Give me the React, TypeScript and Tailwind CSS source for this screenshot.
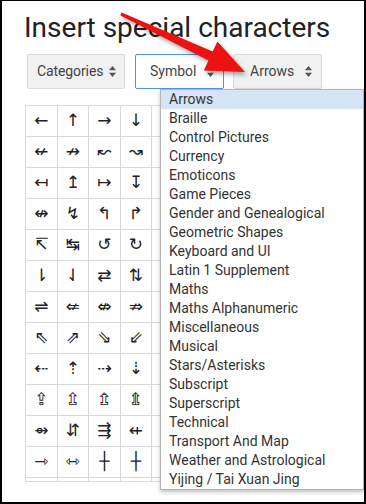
import React from 'react'

const glyphRows = [
  '←↑→↓↔↕↖',
  '↚↛↜↝↞↟↠',
  '↤↥↦↧↨↩↪',
  '↮↯↰↱↲↳↴',
  '↸↹↺↻↼↽↾',
  '⇂⇃⇄⇅⇆⇇⇈',
  '⇌⇍⇎⇏⇐⇑⇒',
  '⇖⇗⇘⇙⇚⇛⇜',
  '⇠⇡⇢⇣⇤⇥⇦',
  '⇪⇫⇬⇭⇮⇯⇰',
  '⇴⇵⇶⇷⇸⇹⇺',
  '⇾⇿┼┼⇽⇸⇹',
  '⟰⟱⟲⟳⟴⟵⟶',
]

const categories = [
  'Arrows',
  'Braille',
  'Control Pictures',
  'Currency',
  'Emoticons',
  'Game Pieces',
  'Gender and Genealogical',
  'Geometric Shapes',
  'Keyboard and UI',
  'Latin 1 Supplement',
  'Maths',
  'Maths Alphanumeric',
  'Miscellaneous',
  'Musical',
  'Stars/Asterisks',
  'Subscript',
  'Superscript',
  'Technical',
  'Transport And Map',
  'Weather and Astrological',
  'Yijing / Tai Xuan Jing',
]

function SortIcon() {
  return (
    <svg width="7" height="11" viewBox="0 0 7 11" className="shrink-0">
      <path d="M3.5 0 L7 4.2 L0 4.2 Z" fill="#555" />
      <path d="M0 6.8 L7 6.8 L3.5 11 Z" fill="#555" />
    </svg>
  )
}

function SelectButton({ label, className }: { label: string; className: string }) {
  return (
    <div
      className={`flex h-[35px] items-center justify-between rounded-[2px] border text-[14px] text-[#444] ${className}`}
    >
      <span>{label}</span>
      <SortIcon />
    </div>
  )
}

export default function App() {
  return (
    <div className="relative h-[504px] w-[366px] overflow-hidden border-t border-r-2 border-b-2 border-l-2 border-black bg-white font-['Roboto',sans-serif]">
      <h1 className="pt-[11px] pl-[22px] text-[28px] leading-[32px] font-normal text-[#222]">
        Insert special characters
      </h1>

      <div className="mt-[10px] flex pl-[25px]">
        <SelectButton
          label="Categories"
          className="w-[98px] gap-[6px] border-[#dadada] bg-[#f1f1f1] pr-[9px] pl-[9px] tracking-[-0.1px]"
        />
        <SelectButton label="Symbol" className="ml-[10px] w-[89px] border-[#4d90fe] bg-white pr-[9px] pl-[14px]" />
        <SelectButton label="Arrows" className="ml-[9px] w-[89px] border-[#dadada] bg-[#f1f1f1] pr-[9px] pl-[16px]" />
      </div>

      <div className="mt-[16px] ml-[23px] h-[377px] w-[230px] overflow-hidden border-t border-b border-l border-[#d9d9d9]">
        {glyphRows.map((row, r) => (
          <div key={r} className="flex">
            {Array.from(row).map((g, c) => (
              <div
                key={c}
                className="flex h-[31px] w-[31.5px] shrink-0 items-center justify-center border-r border-b border-[#d9d9d9] font-['DejaVu_Sans',sans-serif] text-[17px] text-[#222]"
              >
                {g}
              </div>
            ))}
          </div>
        ))}
      </div>

      <ul className="absolute top-[88px] left-[158px] w-[204px] border border-[#b5b5b5] bg-white shadow-[0_2px_4px_rgba(0,0,0,0.25)]">
        {categories.map((name, i) => (
          <li
            key={name}
            className={`h-[19px] pl-[8px] text-[14px] leading-[19px] text-[#333] ${i === 0 ? 'bg-[#d5e5f6]' : ''}`}
          >
            {name}
          </li>
        ))}
      </ul>

      <svg
        width="366"
        height="504"
        viewBox="0 0 366 504"
        className="pointer-events-none absolute top-[-1px] left-[-2px] drop-shadow-[2px_3px_2px_rgba(0,0,0,0.35)]"
      >
        <polygon
          points="121.6,12.6 212.7,51.4 217.4,41.4 245,72 203.8,70.4 208.5,60.4 120.4,15.4"
          fill="#ee1111"
        />
      </svg>
    </div>
  )
}
